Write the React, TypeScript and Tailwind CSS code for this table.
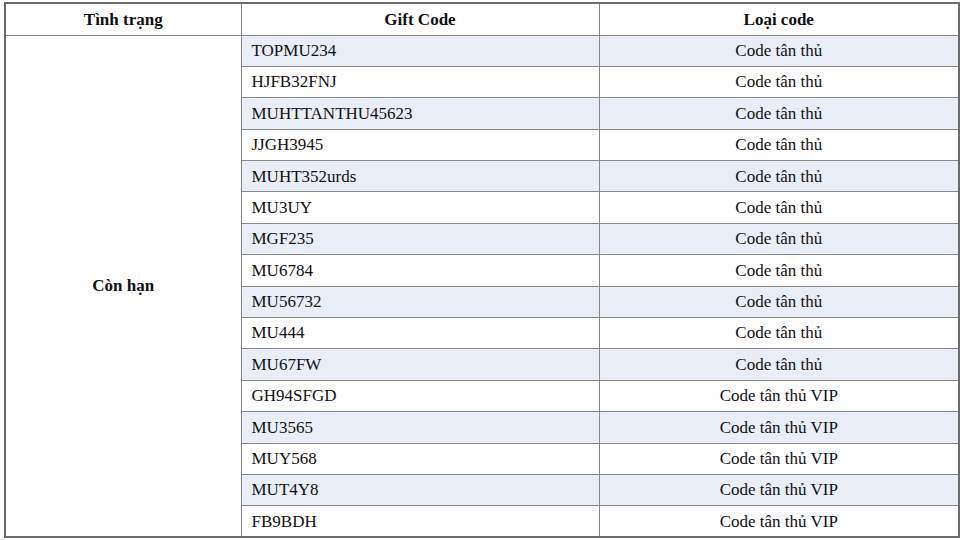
import React from 'react';

interface CodeRow {
  code: string;
  type: string;
}

const rows: CodeRow[] = [
  { code: 'TOPMU234', type: 'Code tân thủ' },
  { code: 'HJFB32FNJ', type: 'Code tân thủ' },
  { code: 'MUHTTANTHU45623', type: 'Code tân thủ' },
  { code: 'JJGH3945', type: 'Code tân thủ' },
  { code: 'MUHT352urds', type: 'Code tân thủ' },
  { code: 'MU3UY', type: 'Code tân thủ' },
  { code: 'MGF235', type: 'Code tân thủ' },
  { code: 'MU6784', type: 'Code tân thủ' },
  { code: 'MU56732', type: 'Code tân thủ' },
  { code: 'MU444', type: 'Code tân thủ' },
  { code: 'MU67FW', type: 'Code tân thủ' },
  { code: 'GH94SFGD', type: 'Code tân thủ VIP' },
  { code: 'MU3565', type: 'Code tân thủ VIP' },
  { code: 'MUY568', type: 'Code tân thủ VIP' },
  { code: 'MUT4Y8', type: 'Code tân thủ VIP' },
  { code: 'FB9BDH', type: 'Code tân thủ VIP' },
];

const App: React.FC = () => {
  return (
    <div className="w-[960px] h-[540px] bg-white pl-[4px] pt-[2px] overflow-hidden">
      <table
        className="w-[954px] border-collapse border-2 border-[#6b6b6b] text-[17px] text-[#111] table-fixed"
        style={{ fontFamily: '"Liberation Serif", "Times New Roman", serif' }}
      >
        <colgroup>
          <col className="w-[236px]" />
          <col className="w-[358px]" />
          <col className="w-[360px]" />
        </colgroup>
        <thead>
          <tr className="h-[32px]">
            <th className="border border-[#888] font-bold text-center p-0">Tình trạng</th>
            <th className="border border-[#888] font-bold text-center p-0">Gift Code</th>
            <th className="border border-[#888] font-bold text-center p-0">Loại code</th>
          </tr>
        </thead>
        <tbody>
          {rows.map((row, i) => (
            <tr key={row.code} className="h-[31.4px]">
              {i === 0 && (
                <td rowSpan={rows.length} className="border border-[#888] font-bold text-center align-middle bg-white p-0">
                  Còn hạn
                </td>
              )}
              <td className={`border border-[#888] text-left pl-[10px] py-0 ${i % 2 === 0 ? 'bg-[#e9edf6]' : 'bg-white'}`}>
                {row.code}
              </td>
              <td className={`border border-[#888] text-center p-0 ${i % 2 === 0 ? 'bg-[#e9edf6]' : 'bg-white'}`}>
                {row.type}
              </td>
            </tr>
          ))}
        </tbody>
      </table>
    </div>
  );
};

export default App;
